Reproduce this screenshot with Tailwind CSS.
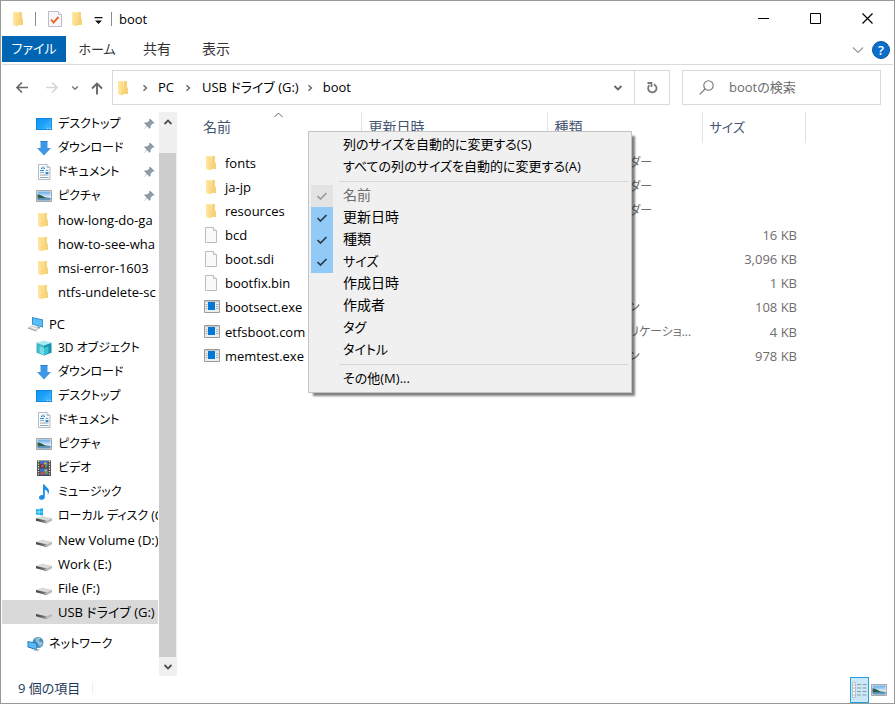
<!DOCTYPE html>
<html lang="ja">
<head>
<meta charset="utf-8">
<meta name="viewport" content="width=device-width, initial-scale=1">
<title>boot</title>
<script src="https://cdn.jsdelivr.net/npm/@tailwindcss/browser@4"></script>
</head>
<body class="bg-white font-['Open_Sans','Noto_Sans_CJK_JP',sans-serif] text-[13px] leading-6 text-black [font-feature-settings:'palt']">

<svg class="h-0 w-0" aria-hidden="true">
  <defs>
    <linearGradient id="gFolder" x1="0" x2="1"><stop offset="0" stop-color="#ffe9a6"/><stop offset="1" stop-color="#fbd77c"/></linearGradient>
    <linearGradient id="gDesk" x1="0" y1="0" x2="1" y2="1"><stop offset="0" stop-color="#0e94f4"/><stop offset="1" stop-color="#2fb0fd"/></linearGradient>
    <linearGradient id="gSky" x1="0" y1="0" x2="0" y2="1"><stop offset="0" stop-color="#5fa8e6"/><stop offset=".6" stop-color="#dcecf8"/><stop offset="1" stop-color="#b9d6ea"/></linearGradient>
    <linearGradient id="gDrive" x1="0" x2="1"><stop offset="0" stop-color="#3c3c3c"/><stop offset="1" stop-color="#8d8d8d"/></linearGradient>
  </defs>
  <symbol id="folder" viewBox="0 0 16 16"><path d="M2 1h6v13H2z" fill="#ffeab0"/><path d="M8 1h3v6.500h1V14H7z" fill="#f6d27a"/><path d="M2 1l5 1.600V15.500L2 14z" fill="url(#gFolder)"/></symbol>
  <symbol id="desktop" viewBox="0 0 16 16"><path d="M0 2h16v12H0z" fill="#0b7fd6"/><path d="M.7 2.700h14.600v10.600H.7z" fill="url(#gDesk)"/><path d="M15.300 2.700v10.600H6z" fill="#41b6ff" opacity=".5"/><path d="M11 12.300h1M13 12.300h1.600" stroke="#b8e2ff"/></symbol>
  <symbol id="download" viewBox="0 0 16 16"><path d="M4.500 1h7v7H15l-7 7.500L1 8h3.500z" fill="#3e97e4"/><path d="M4.500 1h7v1h-7z" fill="#2c83d0"/></symbol>
  <symbol id="document" viewBox="0 0 16 16"><path d="M2.500.5h8.500l3 3v12H2.500z" fill="#fbfbfb" stroke="#b5babf"/><path d="M11 .5v3h3" fill="#e4e7ea" stroke="#b5babf"/><path d="M4 8.500h4M9.500 6.500h3M4 11h8.500M4 13.500h8.500" stroke="#8aa6bd"/><path d="M5 3.500h1V5H5zM6.500 2.500h1V5h-1zM8 3.500h1V5H8zM4 6h4v1H4zM9.500 8h3v2h-3z" fill="#2c8bd6"/></symbol>
  <symbol id="picture" viewBox="0 0 16 16"><path d="M.5 2.500h15v11H.5z" fill="#f5f5f5" stroke="#a7a7a7"/><path d="M1.500 3.500h13v9h-13z" fill="url(#gSky)"/><path d="M1.500 6.200c3 .3 5 2 8 3.200l5 .6v.8h-13z" fill="#2c5a4d"/><path d="M1.500 10.200h13v2.300h-13z" fill="#5f95bd"/></symbol>
  <symbol id="pc" viewBox="0 0 17 16"><path d="M5 1l11 2.500v8L5 8.500z" fill="#2687cc"/><path d="M5.800 2l9.500 2.200v6.300L5.800 8z" fill="#5bbcf7"/><path d="M10 10.200l3 .8v1.500l-3-1z" fill="#7b8791"/><path d="M1 11.500l4-2 8 2.600-3.500 2.500z" fill="#c7ccd1"/><path d="M1 11.500l8.500 3.100v.9L1 12.400z" fill="#8f979e"/><path d="M3 11.500l2-1 5.500 1.900-1.800 1.100z" fill="#eef0f2"/></symbol>
  <symbol id="cube" viewBox="0 0 16 16"><path d="M8 .5l7.500 2.300L8 5.500.5 2.800z" fill="#a9eaf1"/><path d="M.5 2.800L8 5.500v10L.5 12.700z" fill="#3cb8cc"/><path d="M15.500 2.800L8 5.500v10l7.500-2.800z" fill="#1593ab"/><path d="M3.500 6l4.500 2v7.500l-4.500-3z" fill="#79dbe6"/><path d="M12.500 6L8 8v7.500l4.500-3z" fill="#3ac1d3"/></symbol>
  <symbol id="video" viewBox="0 0 16 16"><path d="M1 .5h14v15.500H1z" fill="#454545"/><path d="M2.500 1v15M13.500 1v15" stroke="#e8e8e8" stroke-width="1.400" stroke-dasharray="1.300 1.200"/><path d="M4 1h8v6.500H4zM4 8.500h8V15H4z" fill="#3d6fc0"/><path d="M4 4l3 1 1-2.500L10 6h2v1.500H4z" fill="#5c3b2a"/><path d="M8 2.500h2.500v2H8zM8.500 9.500H11v2H8.500z" fill="#f0b52d"/><path d="M5 5h3v2H5zM5 12h4v2.500H5z" fill="#d2473b"/><path d="M9 5.500h2v2H9zM9 12h2.500v2H9z" fill="#4fa84e"/></symbol>
  <symbol id="music" viewBox="0 0 16 16"><path d="M7 .5h1.800c.3 2.600 4.200 3.300 4.200 6.800 0 1.500-.6 2.600-1.300 3.500.6-2.600-.3-4.300-2.900-5v7.400c0 1.500-1.400 2.600-3.100 2.600C4.200 15.800 3 15 3 13.700c0-1.500 1.500-2.600 3-2.600.4 0 .7 0 1 .2z" fill="#1e8fe6"/></symbol>
  <symbol id="drive" viewBox="0 0 16 16"><path d="M0 10L6 7.500l10 2.300-5.500 2.400z" fill="#dadada"/><path d="M0 10l10.500 2.200v3L0 12.300z" fill="url(#gDrive)"/><path d="M10.500 12.200L16 9.800v2.500l-5.500 2.900z" fill="#b9b9b9"/><path d="M8.500 12.800l1 .2v1l-1-.3z" fill="#7ee08a"/></symbol>
  <symbol id="osdrive" viewBox="0 0 16 16"><path d="M0 1.300l2.800-.4v2.800H0zM3.300.8L7 .3v3.400H3.300zM0 4.200h2.800V7L0 6.600zM3.300 4.200H7v3.400L3.300 7z" fill="#14b1f0"/><path d="M0 10.300L6 8l10 2.200-5.500 2.400z" fill="#dadada"/><path d="M0 10.300l10.500 2.300v3L0 12.700z" fill="url(#gDrive)"/><path d="M10.500 12.600L16 10.200v2.500l-5.500 2.900z" fill="#b9b9b9"/><path d="M8.500 13.200l1 .2v1l-1-.3z" fill="#7ee08a"/></symbol>
  <symbol id="network" viewBox="0 0 17 16"><circle cx="11" cy="6.500" r="5.500" fill="#4f8fb8"/><path d="M8 3.500c2-2 4-2.300 5-1.800s-1 2-1 3 2.500 1 3.500 1.500-.5 3-2.500 4.500z" fill="#8fc0d8"/><path d="M.5 5l9.500 2v7.500L.5 11.300z" fill="#1976c2"/><path d="M1.300 6l8 1.700v5.500L1.300 10.600z" fill="#5ab8f5"/><path d="M6 14l4 1.200 3-1.400-2.500-.8z" fill="#aab4bb"/></symbol>
  <symbol id="file" viewBox="0 0 16 16"><path d="M1.500.5h8l3 3v12h-11z" fill="#f9f9f9" stroke="#bcbcbc"/><path d="M9.500.5v3h3" fill="#fff" stroke="#bcbcbc"/></symbol>
  <symbol id="exe" viewBox="0 0 16 16"><path d="M.5 1.500h15v12H.5z" fill="#eeeeee" stroke="#9b9b9b"/><path d="M1 2h14v1.200H1z" fill="#c5c5c5"/><path d="M4 3h7v8H4z" fill="#0078d7"/><path d="M1.500 5.500h2M1.500 7.500h2M1.500 9.500h2M12 5.500h2.500M12 7.500h2.500M12 9.500h2.500" stroke="#a8b2ba"/></symbol>
  <symbol id="pin" viewBox="0 0 12 12"><path d="M7 .5L11.500 5l-1 .8-.8-.2L7.600 7.700l.1 2.200-1 .9L4.100 8.200.5 11.500.4 11.400 3.700 7.800 1.200 5.300l.9-1 2.200.1L6.400 2.300l-.2-.9z" fill="#8d9aa4"/></symbol>
  <symbol id="check" viewBox="0 0 12 12"><path d="M1.500 6l3 3 6-6" fill="none" stroke="currentColor" stroke-width="1.700"/></symbol>
  <symbol id="chev" viewBox="0 0 10 10"><path d="M1.500 3l3.500 3.500L8.500 3" fill="none" stroke="currentColor" stroke-width="1.800"/></symbol>
  <symbol id="crumb" viewBox="0 0 6 8"><path d="M1.500 1.200L4.500 4l-3 2.800" fill="none" stroke="currentColor" stroke-width="1.400"/></symbol>
</svg>

<div class="relative flex min-h-screen flex-col border border-[#999999]">

  <header>
    <div class="flex h-[35px] items-center">
      <svg class="ml-[10px] size-4 shrink-0"><use href="#folder"/></svg>
      <span class="ml-2 h-[14px] w-px bg-[#8a8a8a]"></span>
      <button class="ml-3" aria-label="プロパティ"><svg class="h-4 w-[14px]" viewBox="0 0 14 16"><path d="M.5.500h10l3 3v12H.5z" fill="#f7f7f9" stroke="#b9bfc6"/><path d="M10.500.5v3h3" fill="#fff" stroke="#b9bfc6"/><path d="M3 8.500l2.500 3 5-5.500" fill="none" stroke="#ea6a2c" stroke-width="1.900"/></svg></button>
      <button class="ml-2" aria-label="新しいフォルダー"><svg class="size-4"><use href="#folder"/></svg></button>
      <button class="ml-2" aria-label="クイック アクセス ツール バーのカスタマイズ"><svg class="mt-1 h-2 w-[9px]" viewBox="0 0 9 8"><path d="M.5 0h8v1.300h-8zM1 3.500h7L4.500 7z" fill="#111"/></svg></button>
      <span class="ml-2 h-[14px] w-px bg-[#8a8a8a]"></span>
      <h1 class="ml-[7px]">boot</h1>
      <div class="ml-auto mr-px flex">
        <button class="flex h-[34px] w-[52px] items-center justify-center" aria-label="最小化"><svg class="size-[11px]" viewBox="0 0 11 11"><path d="M0 5.500h11" stroke="#000"/></svg></button>
        <button class="flex h-[34px] w-[52px] items-center justify-center" aria-label="最大化"><svg class="size-[11px]" viewBox="0 0 11 11"><path d="M.5.5h10v10H.5z" fill="none" stroke="#000"/></svg></button>
        <button class="flex h-[34px] w-[52px] items-center justify-center" aria-label="閉じる"><svg class="size-[11px]" viewBox="0 0 11 11"><path d="M.5.500l10 10M10.500.5l-10 10" stroke="#000" stroke-width="1.200"/></svg></button>
      </div>
    </div>
    <div class="mx-px flex items-start border-b border-[#dadada] text-[#333333]">
      <button class="h-[26px] w-16 bg-[#0066b4] pb-[2px] text-white">ファイル</button>
      <button class="h-[28px] w-[62px] pb-[2px]">ホーム</button>
      <button class="h-[28px] w-[58px] pb-[2px] text-[14px]">共有</button>
      <button class="h-[28px] w-[60px] pb-[2px] text-[14px]">表示</button>
      <button class="ml-auto flex h-[28px] items-center" aria-label="リボンの最小化"><svg class="h-2 w-3" viewBox="0 0 12 8"><path d="M1 1.500l5 5 5-5" fill="none" stroke="#9a9a9a" stroke-width="1.200"/></svg></button>
      <button class="ml-2 mr-[3px] mt-[5px] flex size-[18px] items-center justify-center rounded-full border border-[#0b559c] bg-[#0a6fcb] text-[13px] font-semibold leading-4 text-white" aria-label="ヘルプ">?</button>
    </div>
  </header>

  <div class="flex h-[47px] items-center pl-[13px] pr-[13px] pb-[2px]">
    <button class="mr-4" aria-label="戻る"><svg class="size-[15px]" viewBox="0 0 15 15"><path d="M14 7.500H3M8 2.500l-5 5 5 5" fill="none" stroke="#686868" stroke-width="1.700"/></svg></button>
    <button class="mr-[11px]" aria-label="進む"><svg class="size-[15px]" viewBox="0 0 15 15"><path d="M1 7.500h11M7 2.500l5 5-5 5" fill="none" stroke="#d6d6d6" stroke-width="1.700"/></svg></button>
    <button class="mr-[11px] text-[#777777]" aria-label="最近表示した場所"><svg class="size-2"><use href="#chev"/></svg></button>
    <button class="mr-2" aria-label="上へ"><svg class="size-[14px]" viewBox="0 0 14 14"><path d="M7 13.500V2.500M2 7.500l5-5 5 5" fill="none" stroke="#686868" stroke-width="1.900"/></svg></button>
    <div class="flex h-[35px] flex-1 items-center border border-[#d9d9d9]">
      <svg class="ml-[3px] size-4"><use href="#folder"/></svg>
      <svg class="ml-[10px] h-2 w-[6px] text-[#666666]"><use href="#crumb"/></svg>
      <a href="#" class="ml-[10px] pb-[2px]">PC</a>
      <svg class="ml-[11px] h-2 w-[6px] text-[#666666]"><use href="#crumb"/></svg>
      <a href="#" class="ml-[11px] pb-[2px]">USB ドライブ (G:)</a>
      <svg class="ml-2 h-2 w-[6px] text-[#666666]"><use href="#crumb"/></svg>
      <a href="#" class="ml-[10px] pb-[2px]">boot</a>
      <button class="ml-auto mr-[11px] text-[#666666]" aria-label="以前の場所"><svg class="size-[10px]"><use href="#chev"/></svg></button>
      <button class="flex h-full w-[35px] items-center justify-center border-l border-[#d9d9d9]" aria-label="最新の情報に更新"><svg class="size-[13px]" viewBox="0 0 13 13"><path d="M7.800 3.300A4.200 4.200 0 1 1 3.400 4.200" fill="none" stroke="#777" stroke-width="1.800"/><path d="M1.500 2h4v4" fill="none" stroke="#777" stroke-width="1.800"/></svg></button>
    </div>
    <label class="ml-3 flex h-[35px] w-[199px] items-center border border-[#d9d9d9]">
      <svg class="ml-4 size-[15px] shrink-0" viewBox="0 0 15 15"><circle cx="9.500" cy="5.500" r="4.700" fill="none" stroke="#777" stroke-width="1.100"/><path d="M6 9L.7 14.300" stroke="#777" stroke-width="1.200"/></svg>
      <input type="search" aria-label="bootの検索" placeholder="bootの検索" class="ml-[15px] w-full min-w-0 pb-px outline-none placeholder:text-[#6d6d6d]">
    </label>
  </div>

  <div class="flex flex-1">
    <nav class="w-[157px] shrink-0 overflow-hidden whitespace-nowrap pl-px" aria-label="ナビゲーション ウィンドウ">
      <ul class="mb-2">
        <li><a href="#" class="flex h-6 items-center gap-[6px] pl-[34px]"><svg class="size-4 shrink-0"><use href="#desktop"/></svg><span class="flex-1 text-[12px]">デスクトップ</span><svg class="mr-[3px] size-3"><use href="#pin"/></svg></a></li>
        <li><a href="#" class="flex h-6 items-center gap-[6px] pl-[34px]"><svg class="size-4 shrink-0"><use href="#download"/></svg><span class="flex-1 text-[12px]">ダウンロード</span><svg class="mr-[3px] size-3"><use href="#pin"/></svg></a></li>
        <li><a href="#" class="flex h-6 items-center gap-[6px] pl-[34px]"><svg class="size-4 shrink-0"><use href="#document"/></svg><span class="flex-1 text-[12px]">ドキュメント</span><svg class="mr-[3px] size-3"><use href="#pin"/></svg></a></li>
        <li><a href="#" class="flex h-6 items-center gap-[6px] pl-[34px]"><svg class="size-4 shrink-0"><use href="#picture"/></svg><span class="flex-1 text-[12px]">ピクチャ</span><svg class="mr-[3px] size-3"><use href="#pin"/></svg></a></li>
        <li><a href="#" class="flex h-6 items-center gap-[6px] pl-[34px]"><svg class="size-4 shrink-0"><use href="#folder"/></svg>how-long-do-ga</a></li>
        <li><a href="#" class="flex h-6 items-center gap-[6px] pl-[34px]"><svg class="size-4 shrink-0"><use href="#folder"/></svg>how-to-see-wha</a></li>
        <li><a href="#" class="flex h-6 items-center gap-[6px] pl-[34px]"><svg class="size-4 shrink-0"><use href="#folder"/></svg>msi-error-1603</a></li>
        <li><a href="#" class="flex h-6 items-center gap-[6px] pl-[34px]"><svg class="size-4 shrink-0"><use href="#folder"/></svg>ntfs-undelete-sc</a></li>
      </ul>
      <ul class="mb-2">
        <li><a href="#" class="flex h-6 items-center gap-[5px] pl-[25px]"><svg class="h-4 w-[17px] shrink-0"><use href="#pc"/></svg>PC</a></li>
        <li><a href="#" class="flex h-6 items-center gap-[6px] pl-[34px] text-[12px]"><svg class="size-4 shrink-0"><use href="#cube"/></svg>3D オブジェクト</a></li>
        <li><a href="#" class="flex h-6 items-center gap-[6px] pl-[34px] text-[12px]"><svg class="size-4 shrink-0"><use href="#download"/></svg>ダウンロード</a></li>
        <li><a href="#" class="flex h-6 items-center gap-[6px] pl-[34px] text-[12px]"><svg class="size-4 shrink-0"><use href="#desktop"/></svg>デスクトップ</a></li>
        <li><a href="#" class="flex h-6 items-center gap-[6px] pl-[34px] text-[12px]"><svg class="size-4 shrink-0"><use href="#document"/></svg>ドキュメント</a></li>
        <li><a href="#" class="flex h-6 items-center gap-[6px] pl-[34px] text-[12px]"><svg class="size-4 shrink-0"><use href="#picture"/></svg>ピクチャ</a></li>
        <li><a href="#" class="flex h-6 items-center gap-[6px] pl-[34px] text-[12px]"><svg class="size-4 shrink-0"><use href="#video"/></svg>ビデオ</a></li>
        <li><a href="#" class="flex h-6 items-center gap-[6px] pl-[34px] text-[12px]"><svg class="size-4 shrink-0"><use href="#music"/></svg>ミュージック</a></li>
        <li><a href="#" class="flex h-6 items-center gap-[6px] pl-[34px] text-[12px]"><svg class="size-4 shrink-0"><use href="#osdrive"/></svg>ローカル ディスク (C:)</a></li>
        <li><a href="#" class="flex h-6 items-center gap-[6px] pl-[34px]"><svg class="size-4 shrink-0"><use href="#drive"/></svg>New Volume (D:)</a></li>
        <li><a href="#" class="flex h-6 items-center gap-[6px] pl-[34px]"><svg class="size-4 shrink-0"><use href="#drive"/></svg>Work (E:)</a></li>
        <li><a href="#" class="flex h-6 items-center gap-[6px] pl-[34px]"><svg class="size-4 shrink-0"><use href="#drive"/></svg>File (F:)</a></li>
        <li><a href="#" aria-current="true" class="flex h-6 items-center gap-[6px] bg-[#d9d9d9] pl-[34px]"><svg class="size-4 shrink-0"><use href="#drive"/></svg>USB ドライブ (G:)</a></li>
      </ul>
      <a href="#" class="flex h-6 items-center gap-[5px] pl-[25px] text-[12px]"><svg class="h-4 w-[17px] shrink-0"><use href="#network"/></svg>ネットワーク</a>
    </nav>

    <div class="ml-px flex w-[18px] shrink-0 flex-col bg-[#f0f0f0] text-[#505050]">
      <button class="flex h-[19px] items-center justify-center" aria-label="上へスクロール"><svg class="size-[10px] rotate-180"><use href="#chev"/></svg></button>
      <div class="mr-px mt-[22px] flex-1 bg-[#cdcdcd]"></div>
      <button class="flex h-[19px] items-center justify-center" aria-label="下へスクロール"><svg class="size-[10px]"><use href="#chev"/></svg></button>
    </div>

    <main class="min-w-0 flex-1">
      <table class="w-full table-fixed border-collapse text-left">
        <colgroup><col class="w-[184px]"><col class="w-[186px]"><col class="w-[155px]"><col class="w-[103px]"><col></colgroup>
        <thead class="text-[#44546f]">
          <tr class="h-[31px]">
            <th class="relative border-r border-[#e2e2e2] pb-[2px] pl-[26px] text-[14px] font-normal">名前<svg class="absolute left-[97px] top-0 h-[6px] w-[9px]" viewBox="0 0 9 6"><path d="M.5 5l4-4 4 4" fill="none" stroke="#666"/></svg></th>
            <th class="border-r border-[#e2e2e2] pb-[2px] pl-[7px] text-[14px] font-normal">更新日時</th>
            <th class="border-r border-[#e2e2e2] pb-[2px] pl-[7px] text-[14px] font-normal">種類</th>
            <th class="border-r border-[#e2e2e2] pb-[2px] pl-[7px] font-normal">サイズ</th>
            <th></th>
          </tr>
        </thead>
        <tbody class="whitespace-nowrap text-[#6d6d6d] before:block before:h-2">
          <tr class="h-6"><td class="pl-[27px] text-black"><span class="flex items-center gap-[5px]"><svg class="size-4"><use href="#folder"/></svg>fonts</span></td><td></td><td class="pl-[7px] text-[12px]">ファイル フォルダー</td><td></td><td></td></tr>
          <tr class="h-6"><td class="pl-[27px] text-black"><span class="flex items-center gap-[5px]"><svg class="size-4"><use href="#folder"/></svg>ja-jp</span></td><td></td><td class="pl-[7px] text-[12px]">ファイル フォルダー</td><td></td><td></td></tr>
          <tr class="h-6"><td class="pl-[27px] text-black"><span class="flex items-center gap-[5px]"><svg class="size-4"><use href="#folder"/></svg>resources</span></td><td></td><td class="pl-[7px] text-[12px]">ファイル フォルダー</td><td></td><td></td></tr>
          <tr class="h-6"><td class="pl-[27px] text-black"><span class="flex items-center gap-[5px]"><svg class="size-4"><use href="#file"/></svg>bcd</span></td><td></td><td class="pl-[7px] text-[12px]">ファイル</td><td class="pr-2 text-right">16 KB</td><td></td></tr>
          <tr class="h-6"><td class="pl-[27px] text-black"><span class="flex items-center gap-[5px]"><svg class="size-4"><use href="#file"/></svg>boot.sdi</span></td><td></td><td class="pl-[7px] text-[12px]">ファイル</td><td class="pr-2 text-right">3,096 KB</td><td></td></tr>
          <tr class="h-6"><td class="pl-[27px] text-black"><span class="flex items-center gap-[5px]"><svg class="size-4"><use href="#file"/></svg>bootfix.bin</span></td><td></td><td class="pl-[7px] text-[12px]">ファイル</td><td class="pr-2 text-right">1 KB</td><td></td></tr>
          <tr class="h-6"><td class="pl-[27px] text-black"><span class="flex items-center gap-[5px]"><svg class="size-4"><use href="#exe"/></svg>bootsect.exe</span></td><td></td><td class="pl-[7px] text-[12px]">アプリケーション</td><td class="pr-2 text-right">108 KB</td><td></td></tr>
          <tr class="h-6"><td class="pl-[27px] text-black"><span class="flex items-center gap-[5px]"><svg class="size-4"><use href="#exe"/></svg>etfsboot.com</span></td><td></td><td class="pl-[7px] text-[12px]"><span class="text-[13px]">MS-DOS</span> アプリケーショ...</td><td class="pr-2 text-right">4 KB</td><td></td></tr>
          <tr class="h-6"><td class="pl-[27px] text-black"><span class="flex items-center gap-[5px]"><svg class="size-4"><use href="#exe"/></svg>memtest.exe</span></td><td></td><td class="pl-[7px] text-[12px]">アプリケーション</td><td class="pr-2 text-right">978 KB</td><td></td></tr>
        </tbody>
      </table>
    </main>
  </div>

  <footer class="flex h-[27px] items-center justify-between pl-[17px] pr-[7px] text-[#1e395b]">
    <span class="flex items-center gap-3 pb-[3px]">9 個の項目<span class="h-3 w-px bg-[#eeeeee]"></span></span>
    <div class="flex items-center gap-[2px]">
      <button class="flex h-[26px] w-[19px] items-center justify-center border border-[#26a0da] bg-[#cbe8f6]" aria-label="詳細"><svg class="h-4 w-[15px]" viewBox="0 0 15 16"><path d="M.5.500h3v15h-3z" fill="#fff" stroke="#b5c0c8"/><path d="M1.500 3h1M1.500 9.500h1M1.500 13h1" stroke="#53748c"/><path d="M1.500 6h1" stroke="#d0413a"/><path d="M5 2.500h4M10.500 2.500h4M5 6h4M10.500 6h4M5 9.500h4M10.500 9.500h4M5 13h4M10.500 13h4" stroke="#8b9aa5"/></svg></button>
      <button aria-label="大アイコン"><svg class="size-4"><use href="#picture"/></svg></button>
    </div>
  </footer>

  <div role="menu" class="absolute left-[307px] top-[130px] w-[324px] border border-[#c4c4c4] bg-[#f0f0f0] p-[2px] shadow-[4px_4px_2px_-1px_rgba(0,0,0,0.5)]">
    <button role="menuitem" class="flex h-[22px] w-full items-center pb-[2px] pl-8">列のサイズを自動的に変更する(S)</button>
    <button role="menuitem" class="flex h-[22px] w-full items-center pb-[2px] pl-8">すべての列のサイズを自動的に変更する(A)</button>
    <div role="separator" class="mb-[3px] ml-7 mt-[3px] h-px bg-[#d7d7d7]"></div>
    <button role="menuitemcheckbox" aria-checked="true" disabled class="flex h-[22px] w-full items-center gap-[10px] text-[14px] text-[#6d6d6d]"><span class="flex size-[22px] items-center justify-center bg-[#e3e3e3] text-[#9a9a9a]"><svg class="size-3"><use href="#check"/></svg></span><span class="pb-[2px]">名前</span></button>
    <button role="menuitemcheckbox" aria-checked="true" class="flex h-[22px] w-full items-center gap-[10px] text-[14px]"><span class="flex size-[22px] items-center justify-center bg-[#91c9f7] text-[#2b3a48]"><svg class="size-3"><use href="#check"/></svg></span><span class="pb-[2px]">更新日時</span></button>
    <button role="menuitemcheckbox" aria-checked="true" class="flex h-[22px] w-full items-center gap-[10px] text-[14px]"><span class="flex size-[22px] items-center justify-center bg-[#91c9f7] text-[#2b3a48]"><svg class="size-3"><use href="#check"/></svg></span><span class="pb-[2px]">種類</span></button>
    <button role="menuitemcheckbox" aria-checked="true" class="flex h-[22px] w-full items-center gap-[10px]"><span class="flex size-[22px] items-center justify-center bg-[#91c9f7] text-[#2b3a48]"><svg class="size-3"><use href="#check"/></svg></span><span class="pb-[2px]">サイズ</span></button>
    <button role="menuitemcheckbox" aria-checked="false" class="flex h-[22px] w-full items-center pb-[2px] pl-8 text-[14px]">作成日時</button>
    <button role="menuitemcheckbox" aria-checked="false" class="flex h-[22px] w-full items-center pb-[2px] pl-8 text-[14px]">作成者</button>
    <button role="menuitemcheckbox" aria-checked="false" class="flex h-[22px] w-full items-center pb-[2px] pl-8">タグ</button>
    <button role="menuitemcheckbox" aria-checked="false" class="flex h-[22px] w-full items-center pb-[2px] pl-8">タイトル</button>
    <div role="separator" class="mb-[3px] ml-7 mt-[3px] h-px bg-[#d7d7d7]"></div>
    <button role="menuitem" class="flex h-[22px] w-full items-center pb-[2px] pl-8">その他(M)...</button>
  </div>
</div>
</body>
</html>
